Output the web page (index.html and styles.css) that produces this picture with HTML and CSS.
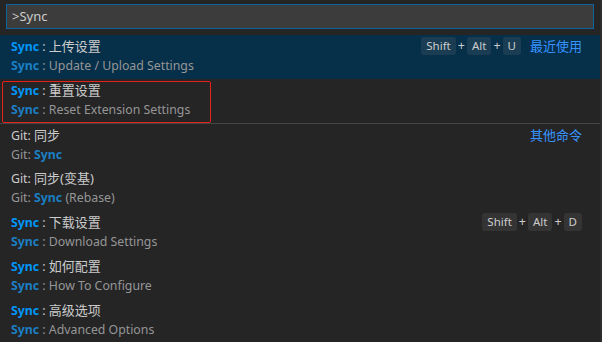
FILE: index.html
```html
<!DOCTYPE html>
<html>
<head>
    <meta charset="utf-8">
    <title>Command Palette</title>
    <link rel="stylesheet" href="styles.css">
</head>
<body>
    <div class="palette">
        <div class="input-wrap">
            <div class="input">&gt;Sync</div>
        </div>
        <div class="list">
            <div class="row selected">
                <div class="line">
                    <span class="label"><b>Sync</b> : <span class="zh">上传设置</span></span>
                    <span class="keys">
                        <span class="key">Shift</span><span class="plus">+</span><span class="key">Alt</span><span class="plus">+</span><span class="key">U</span>
                    </span>
                    <span class="tag zh">最近使用</span>
                </div>
                <div class="detail"><b>Sync</b> : Update / Upload Settings</div>
            </div>
            <div class="row">
                <div class="mark"></div>
                <div class="line">
                    <span class="label"><b>Sync</b> : <span class="zh">重置设置</span></span>
                </div>
                <div class="detail"><b>Sync</b> : Reset Extension Settings</div>
            </div>
            <div class="row sep">
                <div class="line">
                    <span class="label">Git: <span class="zh">同步</span></span>
                    <span class="tag zh">其他命令</span>
                </div>
                <div class="detail">Git: <b>Sync</b></div>
            </div>
            <div class="row">
                <div class="line">
                    <span class="label">Git: <span class="zh">同步(变基)</span></span>
                </div>
                <div class="detail">Git: <b>Sync</b> (Rebase)</div>
            </div>
            <div class="row">
                <div class="line">
                    <span class="label"><b>Sync</b> : <span class="zh">下载设置</span></span>
                    <span class="keys">
                        <span class="key">Shift</span><span class="plus">+</span><span class="key">Alt</span><span class="plus">+</span><span class="key">D</span>
                    </span>
                </div>
                <div class="detail"><b>Sync</b> : Download Settings</div>
            </div>
            <div class="row">
                <div class="line">
                    <span class="label"><b>Sync</b> : <span class="zh">如何配置</span></span>
                </div>
                <div class="detail"><b>Sync</b> : How To Configure</div>
            </div>
            <div class="row">
                <div class="line">
                    <span class="label"><b>Sync</b> : <span class="zh">高级选项</span></span>
                </div>
                <div class="detail"><b>Sync</b> : Advanced Options</div>
            </div>
        </div>
    </div>
</body>
</html>
```

FILE: styles.css
```css
html, body{
    margin: 0;
    padding: 0;
    background-color: #252526;
    overflow: hidden;
}
.palette{
    width: 600px;
    height: 342px;
    border-right: solid 2px #2d2d2e;
    font-family: "Noto Sans", "Noto Sans CJK SC", sans-serif;
    font-size: 12.3px;
    color: #cccccc;
}
.zh{
    font-size: 13px;
}
.input-wrap{
    padding: 4px 6px 6px 6px;
}
.input{
    height: 23px;
    line-height: 22px;
    padding-left: 5px;
    background-color: #3c3c3c;
    border: solid 1px #0e639c;
    color: #cccccc;
    font-size: 13px;
}
.row{
    position: relative;
    height: 44px;
    padding: 0 18px 0 11px;
    box-sizing: border-box;
}
.row.selected{
    background-color: #062f4a;
}
.row.sep{
    border-top: solid 1px #454545;
}
.line{
    display: flex;
    align-items: center;
    height: 21px;
}
.label{
    flex: 1 1 auto;
    white-space: nowrap;
}
.label b,
.detail b{
    color: #0097fb;
    font-weight: bold;
}
.detail b{
    color: #1b7fc4;
}
.detail{
    height: 18px;
    line-height: 18px;
    padding-top: 1px;
    color: #969696;
    white-space: nowrap;
}
.keys{
    display: flex;
    align-items: center;
    font-size: 11.5px;
}
.key{
    height: 18px;
    line-height: 18px;
    padding: 0 5px;
    border-radius: 3px;
    background-color: rgba(128, 128, 128, 0.17);
    color: #cccccc;
}
.plus{
    padding: 0 2px;
    font-size: 12.5px;
}
.tag{
    margin-left: 9px;
    color: #3794ff;
}
.mark{
    position: absolute;
    left: 2px;
    top: 2px;
    width: 207px;
    height: 40px;
    border: solid 1px #e8201c;
    border-radius: 2px;
}
```
